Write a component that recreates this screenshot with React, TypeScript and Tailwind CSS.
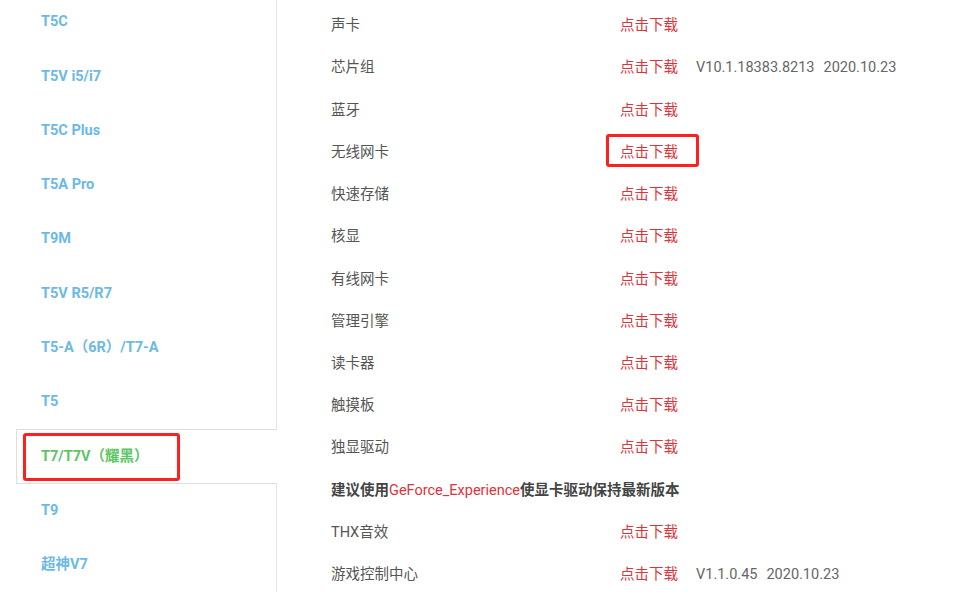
import React from "react";

const models = [
  "T5C",
  "T5V i5/i7",
  "T5C Plus",
  "T5A Pro",
  "T9M",
  "T5V R5/R7",
  "T5-A（6R）/T7-A",
  "T5",
  "T7/T7V（耀黑）",
  "T9",
  "超神V7",
];

const drivers: { name: string; version?: string; date?: string; boxed?: boolean; note?: boolean }[] = [
  { name: "声卡" },
  { name: "芯片组", version: "V10.1.18383.8213", date: "2020.10.23" },
  { name: "蓝牙" },
  { name: "无线网卡", boxed: true },
  { name: "快速存储" },
  { name: "核显" },
  { name: "有线网卡" },
  { name: "管理引擎" },
  { name: "读卡器" },
  { name: "触摸板" },
  { name: "独显驱动" },
  { name: "", note: true },
  { name: "THX音效" },
  { name: "游戏控制中心", version: "V1.1.0.45", date: "2020.10.23" },
];

export default function App() {
  const active = "T7/T7V（耀黑）";

  return (
    <div
      className="w-[960px] h-[596px] overflow-hidden bg-white flex text-[14.5px]"
      style={{ fontFamily: "Roboto, 'Noto Sans CJK SC', sans-serif" }}
    >
      {/* Model list */}
      <div className="w-[277px] shrink-0 flex flex-col -mt-[5px]">
        {models.map((m) =>
          m === active ? (
            <div
              key={m}
              className="relative h-[54.3px] ml-[16px] border-y border-l border-[#dedede] bg-white flex items-center pl-[24px] font-bold text-[#5cc565]"
            >
              {m}
              <div className="absolute left-[6px] top-[3px] w-[157px] h-[48px] border-[3px] border-[#ff1f1f] rounded-[3px]" />
            </div>
          ) : (
            <div
              key={m}
              className="h-[54.3px] border-r border-[#e6e6e6] flex items-center pl-[41px] font-bold text-[#6cb9e5]"
            >
              {m}
            </div>
          )
        )}
      </div>

      {/* Driver table */}
      <div className="flex-1 flex flex-col pl-[54px] pt-[5px]">
        {drivers.map((d, i) =>
          d.note ? (
            <div key={i} className="h-[42.3px] flex items-center font-bold text-[#444]">
              建议使用<span className="font-normal text-[#e0323c]">GeForce_Experience</span>使显卡驱动保持最新版本
            </div>
          ) : (
            <div key={i} className="h-[42.3px] flex items-center">
              <span className="w-[289px] text-[#555]">{d.name}</span>
              <span className="relative text-[#d9363e]">
                点击下载
                {d.boxed && (
                  <span className="absolute -left-[14px] -top-[8px] w-[93px] h-[33px] border-[3px] border-[#ff1f1f] rounded-[3px]" />
                )}
              </span>
              {d.version && (
                <span className="ml-[18px] text-[#666]">
                  {d.version}
                  <span className="ml-[9px]">{d.date}</span>
                </span>
              )}
            </div>
          )
        )}
      </div>
    </div>
  );
}
